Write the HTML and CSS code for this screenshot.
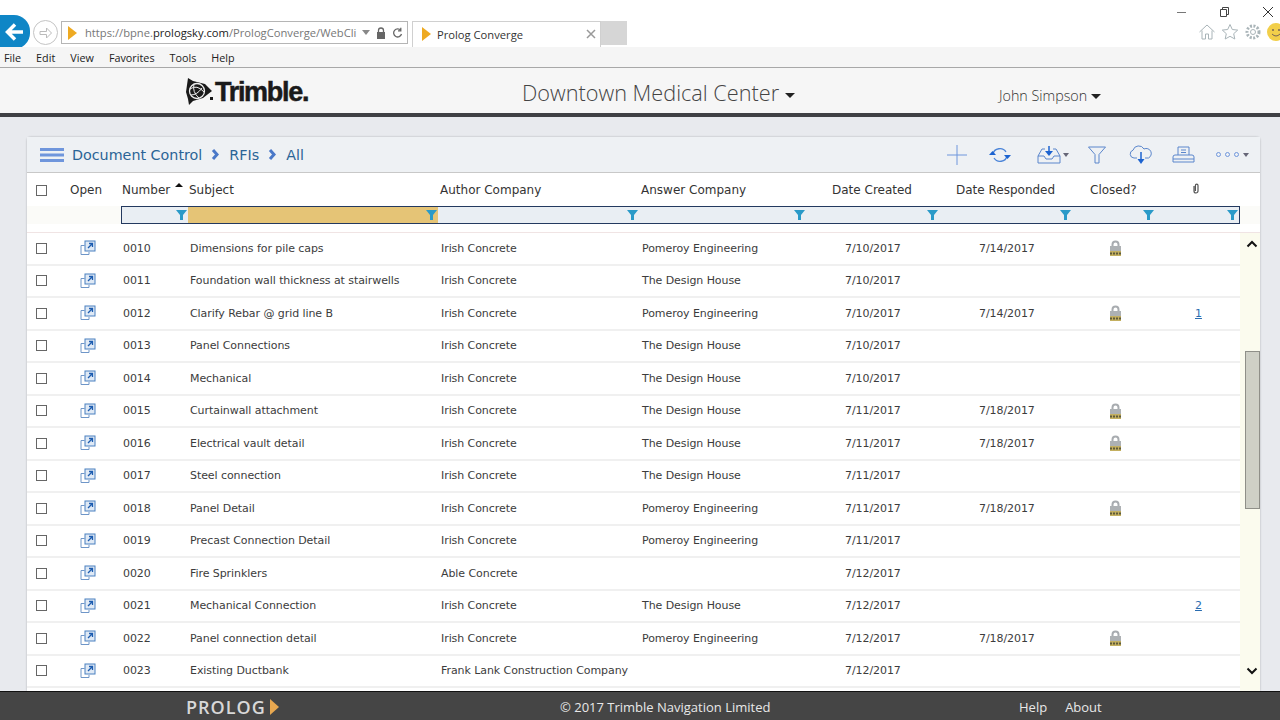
FILE: index.html
```html
<!DOCTYPE html>
<html lang="en">
<head>
    <meta charset="UTF-8">
    <title>Prolog Converge</title>
    <link rel="stylesheet" href="styles.css">
</head>
<body>
    <div class="browser">
        <div class="window-row">
            <div class="win-btn"><svg width="12" height="12" viewBox="0 0 12 12"><path d="M1 6.500h9" stroke="#777" fill="none"/></svg></div>
            <div class="win-btn"><svg width="12" height="12" viewBox="0 0 12 12"><path d="M1.500 3.500h6v7h-6zM3.500 3.500v-2h6v7h-2" stroke="#444" fill="none"/></svg></div>
            <div class="win-btn"><svg width="12" height="12" viewBox="0 0 12 12"><path d="M1 1l10 10M11 1L1 11" stroke="#333" fill="none"/></svg></div>
        </div>
        <div class="nav-row">
            <div class="back-btn"><svg width="24" height="24" viewBox="0 0 24 24"><path d="M20 12H5M12 4.500L4.500 12l7.500 7.500" stroke="#fff" stroke-width="3.500" fill="none"/></svg></div>
            <div class="forward-btn"><svg width="14" height="14" viewBox="0 0 14 14"><path d="M1 5.500h6.500V2l5 5-5 5V8.500H1z" stroke="#bbb" fill="none"/></svg></div>
            <div class="address">
                <span class="tab-arrow"></span>
                <span class="url">https://bpne.<b>prologsky.com</b>/PrologConverge/WebCli</span>
                <span class="address-icons">
                    <svg width="8" height="5" viewBox="0 0 8 5"><path d="M0 0h8L4 5z" fill="#888"/></svg>
                    <svg width="10" height="12" viewBox="0 0 10 12"><path d="M2.500 5V3.500a2.500 2.500 0 0 1 5 0V5" stroke="#666" stroke-width="1.300" fill="none"/><path d="M1 5h8v7H1z" fill="#666"/></svg>
                    <svg width="11" height="12" viewBox="0 0 11 12"><path d="M8.800 3.500A4 4 0 1 0 9.500 7M8.800 .8v3H6" stroke="#666" stroke-width="1.300" fill="none"/></svg>
                </span>
            </div>
            <div class="tab">
                <span class="tab-arrow"></span>
                <span class="tab-title">Prolog Converge</span>
                <svg width="10" height="10" viewBox="0 0 10 10"><path d="M1 1l8 8M9 1L1 9" stroke="#999" stroke-width="1.500" fill="none"/></svg>
            </div>
            <div class="new-tab"></div>
            <div class="tools">
                <svg width="18" height="18" viewBox="0 0 18 18"><path d="M1.500 9L9 2l7.500 7M4 7.500V16h3.500v-5h3v5H14V7.500" stroke="#a9b4b8" fill="none"/></svg>
                <svg width="18" height="18" viewBox="0 0 18 18"><path d="M9 1.500l2.300 5 5.400.6-4 3.600 1.100 5.300L9 13.300 4.200 16l1.100-5.300-4-3.600 5.400-.6z" stroke="#a9b4b8" fill="none"/></svg>
                <svg width="18" height="18" viewBox="0 0 18 18"><circle cx="9" cy="9" r="2.500" stroke="#a9b4b8" fill="none"/><circle cx="9" cy="9" r="6" stroke="#a9b4b8" stroke-width="3" stroke-dasharray="2 1.500" fill="none"/></svg>
                <svg class="smiley" width="18" height="18" viewBox="0 0 18 18"><circle cx="9" cy="9" r="9" fill="#f2cf4a"/><circle cx="6" cy="7" r="1" fill="#765"/><circle cx="12" cy="7" r="1" fill="#765"/><path d="M5 11q4 4 8 0" stroke="#765" fill="none"/></svg>
            </div>
        </div>
        <div class="menu-row">
            <span>File</span><span>Edit</span><span>View</span><span>Favorites</span><span>Tools</span><span>Help</span>
        </div>
    </div>

    <div class="app-header">
        <div class="logo">
            <svg width="29" height="28" viewBox="0 0 29 28"><path d="M2 0l5 3 12 3 7 7-9 7-10 3-4 4-1-6-2-7 1-7z" fill="#1a1a1a"/><circle cx="11" cy="13" r="7.500" fill="none" stroke="#eee" stroke-width="1.300"/><path d="M4 11q7-5 14 3M8 6q-2 8 5 14M5 17q6 0 11-7" fill="none" stroke="#eee"/><rect x="24" y="19" width="3" height="3" fill="#1a1a1a"/></svg>
            <span>Trimble.</span>
        </div>
        <div class="project">Downtown Medical Center<i class="caret"></i></div>
        <div class="user">John Simpson<i class="caret"></i></div>
    </div>

    <div class="content">
        <div class="panel">
            <div class="panel-head">
                <svg class="menu-icon" width="24" height="16" viewBox="0 0 24 16"><path d="M0 1h24v3H0zM0 6.500h24v3H0zM0 12h24v3H0z" fill="#6f96dc"/></svg>
                <span class="crumb">Document Control</span>
                <svg class="crumb-sep" width="9" height="11" viewBox="0 0 9 11"><path d="M2 1l4 4.500-4 4.500" stroke="#4a78c8" stroke-width="3" fill="none"/></svg>
                <span class="crumb">RFIs</span>
                <svg class="crumb-sep" width="9" height="11" viewBox="0 0 9 11"><path d="M2 1l4 4.500-4 4.500" stroke="#4a78c8" stroke-width="3" fill="none"/></svg>
                <span class="crumb">All</span>
                <div class="actions">
                    <svg width="20" height="20" viewBox="0 0 20 20"><path d="M10 0v20M0 10h20" stroke="#6f96dc" fill="none"/></svg>
                    <svg class="a-refresh" width="24" height="18" viewBox="0 0 24 18"><path d="M5 8a7 6.500 0 0 1 13-2M19 10a7 6.500 0 0 1-13 2" stroke="#4a84d8" stroke-width="1.300" fill="none"/><path d="M1 9h7L4.500 5zM16 9h7l-3.500 4z" fill="#1c63d0"/></svg>
                    <span class="action-drop a-inbox">
                        <svg width="24" height="19" viewBox="0 0 24 19"><path d="M1 11v7h22v-7l-4-7h-3M8 4H5l-4 7h6l2 3h6l2-3h6" stroke="#5a86cc" fill="none"/><path d="M12 1v6" stroke="#1c63d0" stroke-width="1.500"/><path d="M8 6h8l-4 5z" fill="#1c63d0"/></svg>
                        <i class="mini-caret"></i>
                    </span>
                    <svg class="a-funnel" width="18" height="18" viewBox="0 0 18 18"><path d="M.5 1h17L11 8.500v8.500H7V8.500z" stroke="#5a86cc" fill="none"/></svg>
                    <svg class="a-cloud" width="24" height="20" viewBox="0 0 24 20"><path d="M8 13H5a4 4 0 0 1-1-7.800A6 6 0 0 1 15 4a4.500 4.500 0 0 1 4.500 9H16" stroke="#5a86cc" fill="none"/><path d="M12 7v8" stroke="#1c63d0" stroke-width="1.500"/><path d="M8.500 14h7L12 19z" fill="#1c63d0"/></svg>
                    <svg class="a-print" width="23" height="17" viewBox="0 0 23 17"><path d="M6 9V1h11v8M3 9h17a2 2 0 0 1 2 2v5H1v-5a2 2 0 0 1 2-2zM1 13h21M9 4h5M9 6.500h5" stroke="#5a86cc" fill="none"/></svg>
                    <span class="action-drop more a-more"><i></i><i></i><i></i><i class="mini-caret"></i></span>
                </div>
            </div>

            <div class="col-row">
                <div class="c-check"><span class="check"></span></div>
                <div class="c-open">Open</div>
                <div class="c-num">Number<i class="sort"></i></div>
                <div class="c-subj">Subject</div>
                <div class="c-author">Author Company</div>
                <div class="c-answer">Answer Company</div>
                <div class="c-created">Date Created</div>
                <div class="c-responded">Date Responded</div>
                <div class="c-closed">Closed?</div>
                <div class="c-attach"><svg width="8" height="11" viewBox="0 0 8 11"><path d="M2 3v5a2 2 0 0 0 4 0V2.500a1.300 1.300 0 0 0-2.600 0V8" stroke="#555" stroke-width="1.200" fill="none"/></svg></div>
            </div>

            <div class="filter-row">
                <div class="filter-pad"></div>
                <div class="filter-box" id="filters"></div>
            </div>

            <div class="rows-wrap">
                <div class="rows" id="rows"></div>
                <div class="scroll">
                    <svg class="scroll-up" width="12" height="8" viewBox="0 0 12 8"><path d="M1.500 6.500L6 2l4.500 4.500" stroke="#111" stroke-width="2" fill="none"/></svg>
                    <div class="thumb"></div>
                    <svg class="scroll-down" width="12" height="8" viewBox="0 0 12 8"><path d="M1.500 1.500L6 6l4.500-4.500" stroke="#111" stroke-width="2" fill="none"/></svg>
                </div>
            </div>
        </div>
    </div>

    <div class="footer">
        <div class="prolog">PROLOG<i></i></div>
        <div class="copyright">© 2017 Trimble Navigation Limited</div>
        <div class="foot-links"><span>Help</span><span>About</span></div>
    </div>

    <script src="app.js"></script>
</body>
</html>
```

FILE: styles.css
```css
* {
    box-sizing: border-box;
}
html, body {
    height: 100%;
}
body {
    margin: 0;
    height: 720px;
    overflow: hidden;
    display: flex;
    flex-direction: column;
    font-family: "DejaVu Sans", sans-serif;
    background-color: #e8eaee;
}

/* browser chrome */
.browser {
    height: 68px;
    flex: none;
    background-color: #fff;
    border-bottom: 1px solid #a8a8a8;
    position: relative;
}
.window-row {
    position: absolute;
    top: 3px;
    right: 6px;
    display: flex;
    gap: 31px;
}
.nav-row {
    height: 47px;
    display: flex;
    align-items: flex-start;
    padding-top: 20px;
    overflow: hidden;
}
.back-btn {
    width: 31px;
    height: 34px;
    margin-top: -5px;
    margin-left: -1px;
    border-radius: 0 16px 16px 0;
    background-color: #0f86c6;
    display: flex;
    align-items: center;
    justify-content: center;
    flex: none;
}
.forward-btn {
    width: 25px;
    height: 25px;
    margin: 0 3px 0 3px;
    border: 1px solid #c4c4c4;
    border-radius: 50%;
    display: flex;
    align-items: center;
    justify-content: center;
    flex: none;
}
.address {
    width: 347px;
    height: 23px;
    margin-top: 1px;
    border: 1px solid #b5b5b5;
    display: flex;
    align-items: center;
    padding-left: 6px;
    font-family: "Open Sans", sans-serif;
    font-size: 11.200px;
    color: #777;
    flex: none;
}
.url {
    margin-left: 8px;
    width: 278px;
    white-space: nowrap;
}
.url b {
    font-weight: 400;
    color: #222;
}
.address-icons {
    display: flex;
    align-items: center;
    gap: 6px;
    margin-left: -1px;
}
.tab-arrow {
    width: 0;
    height: 0;
    flex: none;
    border-left: 9px solid #eeaa22;
    border-top: 7px solid transparent;
    border-bottom: 7px solid transparent;
}
.tab {
    width: 189px;
    height: 27px;
    margin-left: 4px;
    margin-top: 1px;
    border: 1px solid #d0d0d0;
    border-bottom: 0;
    display: flex;
    align-items: center;
    padding: 0 4px 2px 9px;
    font-family: "Open Sans", sans-serif;
    font-size: 11.200px;
    color: #333;
    flex: none;
}
.tab-title {
    margin-left: 6px;
    flex: 1;
}
.new-tab {
    width: 26px;
    height: 24px;
    margin-top: 1px;
    background-color: #d6d6d6;
    flex: none;
}
.tools {
    margin-left: auto;
    margin-right: -5px;
    display: flex;
    gap: 5px;
    margin-top: 3px;
}
.menu-row {
    height: 20px;
    background-color: #f5f5f5;
    display: flex;
    gap: 15px;
    padding-left: 4px;
    align-items: center;
    font-family: "Open Sans", sans-serif;
    font-size: 10.800px;
    color: #222;
}

/* app header */
.app-header {
    height: 49px;
    flex: none;
    background-color: #f6f6f6;
    border-bottom: 4px solid #3f4044;
    display: flex;
    align-items: center;
    position: relative;
}
.logo {
    margin-left: 186px;
    width: 336px;
    padding-top: 3px;
    display: flex;
    align-items: center;
    font-family: "Liberation Sans", sans-serif;
    font-weight: 700;
    font-size: 27px;
    letter-spacing: -1.300px;
    color: #1a1a1a;
    -webkit-text-stroke: .5px #1a1a1a;
}
.logo span {
    padding-top: 1px;
}
.project {
    width: 476px;
    padding-top: 4px;
    font-family: "Open Sans", sans-serif;
    font-weight: 300;
    font-size: 21.700px;
    color: #444;
}
.user {
    margin-left: 1px;
    font-family: "Open Sans", sans-serif;
    font-weight: 300;
    font-size: 14.300px;
    color: #333;
    padding-top: 9px;
}
.caret {
    display: inline-block;
    margin-left: 6px;
    vertical-align: middle;
    border-top: 5px solid #222;
    border-left: 5px solid transparent;
    border-right: 5px solid transparent;
}
.user .caret {
    margin-left: 4px;
}

/* panel */
.content {
    flex: 1;
    min-height: 0;
    padding: 20px 0 0 27px;
    overflow: hidden;
}
.panel {
    height: 100%;
    width: 1233px;
    background-color: #fff;
    border-radius: 4px 4px 0 0;
    box-shadow: 0 0 2px rgba(0,0,0,0.3);
    display: flex;
    flex-direction: column;
}
.panel-head {
    height: 36px;
    flex: none;
    background-color: #eef1f4;
    border-bottom: 1px solid #c8c8c8;
    display: flex;
    align-items: center;
    padding-left: 13px;
    font-size: 14.300px;
    color: #2a6496;
}
.menu-icon {
    margin-right: 8px;
}
.crumb-sep {
    margin: 0 9px;
}
.actions {
    margin-left: auto;
    margin-right: 11px;
    display: flex;
    align-items: center;
    gap: 22px;
}
.a-refresh {
    margin-right: 3px;
    margin-left: -1px;
}
.a-inbox {
    margin-right: -3px;
}
.a-funnel {
    margin-right: 1px;
}
.a-cloud {
    margin-right: -3px;
}
.a-print {
    margin-right: -1px;
}
.action-drop {
    display: flex;
    align-items: center;
    gap: 2px;
}
.mini-caret {
    display: block;
    border-top: 4px solid #667;
    border-left: 3px solid transparent;
    border-right: 3px solid transparent;
}
.more {
    gap: 4px;
}
.more i:not(.mini-caret) {
    width: 5px;
    height: 5px;
    border-radius: 50%;
    border: 1px solid #6f96dc;
}

/* columns */
.col-row, .row {
    display: grid;
    grid-template-columns: 43px 52px 67px 251px 201px 191px 124px 134px 90px 60px;
    align-items: center;
}
.col-row {
    height: 33px;
    flex: none;
    padding-top: 1px;
    font-size: 12px;
    color: #333;
    white-space: nowrap;
}
.c-check {
    padding-left: 9px;
}
.c-num {
    position: relative;
}
.sort {
    position: absolute;
    left: 53px;
    top: 0;
    border-bottom: 4px solid #111;
    border-left: 4px solid transparent;
    border-right: 4px solid transparent;
}
.c-attach {
    padding-left: 12px;
}
.check {
    display: block;
    width: 11px;
    height: 11px;
    border: 1px solid #666;
    background-color: #fff;
}
.filter-row {
    height: 18px;
    flex: none;
    display: flex;
    background-color: #fbfbf8;
}
.filter-pad {
    width: 94px;
}
.filter-box {
    width: 1119px;
    height: 18px;
    border: 1px solid #23395f;
    background-color: #e9eef3;
    display: flex;
}
.filter-cell {
    display: flex;
    align-items: center;
    justify-content: flex-end;
    padding-right: 1px;
}
.filter-cell.active {
    background-color: #e5c476;
}

/* rows */
.rows-wrap {
    flex: 1;
    min-height: 0;
    display: flex;
    margin-top: 8px;
    border-top: 1px solid #f0e4e4;
}
.rows {
    width: 1213px;
    overflow: hidden;
}
.row {
    height: 32.500px;
    border-bottom: 2px solid #f0f0f0;
    font-size: 11px;
    letter-spacing: -.07px;
    color: #3c3c3c;
    white-space: nowrap;
}
.cell-check {
    padding-left: 9px;
}
.cell-open {
    padding-left: 10px;
}
.cell-num {
    padding-left: 1px;
}
.cell-subj, .cell-author, .cell-answer {
    padding-left: 1px;
}
.cell-created {
    padding-left: 13px;
}
.cell-responded {
    padding-left: 23px;
}
.cell-closed {
    padding-left: 19px;
}
.cell-count {
    padding-left: 15px;
    color: #2a6db0;
    text-decoration: underline;
}
.cell-closed svg, .cell-open svg {
    display: block;
}
.scroll {
    width: 20px;
    background-color: #fbfbee;
    position: relative;
}
.thumb {
    position: absolute;
    left: 5px;
    top: 118px;
    width: 15px;
    height: 158px;
    background-color: #cfd0c6;
    border: 1px solid #8f8f88;
}
.scroll-up {
    position: absolute;
    left: 6px;
    top: 7px;
}
.scroll-down {
    position: absolute;
    left: 6px;
    top: 434px;
}

/* footer */
.footer {
    height: 29px;
    flex: none;
    padding-top: 2px;
    background-color: #454545;
    border-top: 1px solid #111;
    display: flex;
    align-items: center;
    color: #e8e8e8;
    font-family: "Open Sans", sans-serif;
    font-size: 13px;
}
.prolog {
    margin-left: 186px;
    width: 374px;
    display: flex;
    align-items: center;
    gap: 4px;
    font-size: 18px;
    font-weight: 600;
    letter-spacing: 1px;
    color: #d8d8d8;
}
.prolog i {
    border-left: 9px solid #e8a850;
    border-top: 8px solid transparent;
    border-bottom: 8px solid transparent;
}
.copyright {
    width: 459px;
}
.foot-links {
    display: flex;
    gap: 18px;
}
```

FILE: app.js
```js
// rfi rows: number, subject, author, answer, created, responded, closed, attachments
const data = [
    ['0010', 'Dimensions for pile caps', 'Irish Concrete', 'Pomeroy Engineering', '7/10/2017', '7/14/2017', true, ''],
    ['0011', 'Foundation wall thickness at stairwells', 'Irish Concrete', 'The Design House', '7/10/2017', '', false, ''],
    ['0012', 'Clarify Rebar @ grid line B', 'Irish Concrete', 'Pomeroy Engineering', '7/10/2017', '7/14/2017', true, '1'],
    ['0013', 'Panel Connections', 'Irish Concrete', 'The Design House', '7/10/2017', '', false, ''],
    ['0014', 'Mechanical', 'Irish Concrete', 'The Design House', '7/10/2017', '', false, ''],
    ['0015', 'Curtainwall attachment', 'Irish Concrete', 'The Design House', '7/11/2017', '7/18/2017', true, ''],
    ['0016', 'Electrical vault detail', 'Irish Concrete', 'The Design House', '7/11/2017', '7/18/2017', true, ''],
    ['0017', 'Steel connection', 'Irish Concrete', 'The Design House', '7/11/2017', '', false, ''],
    ['0018', 'Panel Detail', 'Irish Concrete', 'Pomeroy Engineering', '7/11/2017', '7/18/2017', true, ''],
    ['0019', 'Precast Connection Detail', 'Irish Concrete', 'Pomeroy Engineering', '7/11/2017', '', false, ''],
    ['0020', 'Fire Sprinklers', 'Able Concrete', '', '7/12/2017', '', false, ''],
    ['0021', 'Mechanical Connection', 'Irish Concrete', 'The Design House', '7/12/2017', '', false, '2'],
    ['0022', 'Panel connection detail', 'Irish Concrete', 'Pomeroy Engineering', '7/12/2017', '7/18/2017', true, ''],
    ['0023', 'Existing Ductbank', 'Frank Lank Construction Company', '', '7/12/2017', '', false, '']
];

const openIcon = '<svg width="16" height="16" viewBox="0 0 16 16"><path d="M4.500 5.500H1v9h8V12" stroke="#6f96c8" fill="none"/><rect x="5" y="1" width="10" height="10" fill="#dfe9f5" stroke="#4a80c0"/><path d="M8 8l4-4M9 3.500h3.500V7" stroke="#1c5cb0" stroke-width="1.300" fill="none"/></svg>';
const lockIcon = '<svg width="13" height="16" viewBox="0 0 13 16"><path d="M3.500 7V4.500a3 3 0 0 1 6 0V7" stroke="#a8acb0" stroke-width="2" fill="none"/><rect x="1" y="6" width="11" height="10" fill="#adb1b4"/><rect x="1" y="11" width="11" height="5" fill="#c4b060"/><path d="M1 13.500h11" stroke="#5f5a3a" stroke-width="2" stroke-dasharray="2 1"/></svg>';
const funnel = '<svg width="11" height="10" viewBox="0 0 11 10"><path d="M0 0h11L7 5v5H4V5z" fill="#2a9ac8"/></svg>';

document.getElementById('rows').innerHTML = data.map((r) => `
    <div class="row">
        <div class="cell-check"><span class="check"></span></div>
        <div class="cell-open">${openIcon}</div>
        <div class="cell-num">${r[0]}</div>
        <div class="cell-subj">${r[1]}</div>
        <div class="cell-author">${r[2]}</div>
        <div class="cell-answer">${r[3]}</div>
        <div class="cell-created">${r[4]}</div>
        <div class="cell-responded">${r[5]}</div>
        <div class="cell-closed">${r[6] ? lockIcon : ''}</div>
        <div class="cell-count">${r[7]}</div>
    </div>`).join('');

const widths = [66, 251, 201, 167, 133, 134, 83, 84];
document.getElementById('filters').innerHTML = widths.map((w, i) =>
    `<div class="filter-cell${i === 1 ? ' active' : ''}" style="width:${w}px">${funnel}</div>`).join('');
```
